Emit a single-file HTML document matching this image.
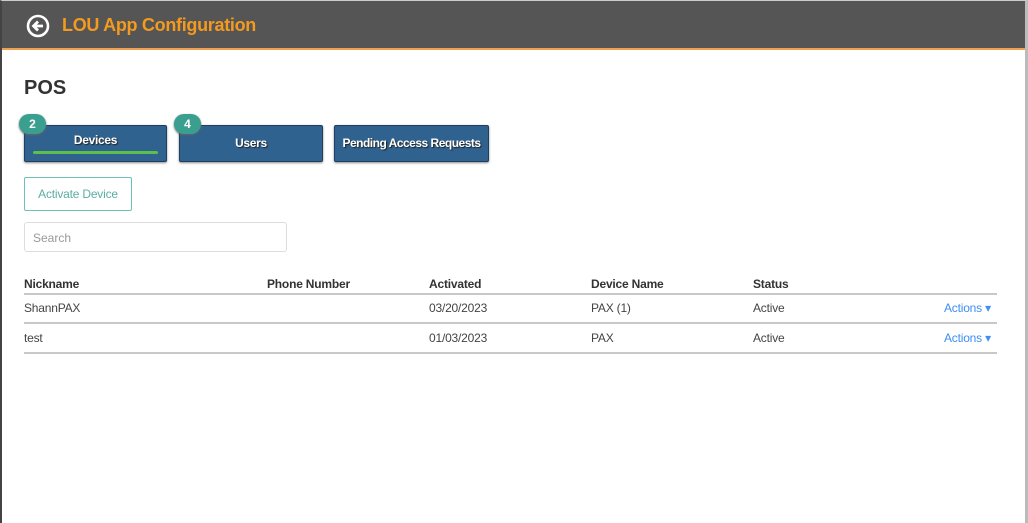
<!DOCTYPE html>
<html><head><meta charset="utf-8"><style>
*{margin:0;padding:0;box-sizing:border-box}
body{width:1028px;height:523px;background:#fff;font-family:"Liberation Sans",sans-serif;position:relative;overflow:hidden}
.frame{position:absolute;left:0;top:0;width:1028px;height:523px;border-left:2px solid #444;border-right:3px solid #bbb;border-top:1px solid #ccc}
.hdr{position:absolute;left:2px;top:1px;width:1023px;height:49px;background:#555;border-bottom:2px solid #f0a050}
.title{position:absolute;left:60px;top:14px;color:#f39a1f;font-weight:bold;font-size:18px;letter-spacing:-0.3px}
.back{position:absolute;left:24px;top:13px;width:24px;height:24px}
.pos{position:absolute;left:24px;top:77px;font-size:20px;font-weight:bold;color:#333}
.tab{position:absolute;top:125px;height:37px;background:#30628f;border:1px solid #1f3f5e;border-radius:2px;color:#fff;font-weight:bold;font-size:12px;letter-spacing:-0.3px;white-space:nowrap;text-align:center;line-height:34px;text-shadow:1px 1px 1px #222;box-shadow:0 1px 2px #888}
.badge{position:absolute;width:27px;height:20px;border-radius:10px;background:#3a9f8f;color:#fff;font-weight:bold;font-size:12px;text-align:center;line-height:20px;box-shadow:0 1px 2px #666}
.btn{position:absolute;left:24px;top:177px;width:108px;height:34px;border:1px solid #6cc2b8;border-radius:2px;color:#5aaea4;font-size:12px;text-align:center;line-height:32px;letter-spacing:-0.2px}
.search{position:absolute;left:24px;top:222px;width:263px;height:30px;border:1px solid #ddd;border-radius:3px;color:#999;font-size:12px;padding:8px 8px}
.t{position:absolute;font-size:12px;color:#444;letter-spacing:-0.2px}
.h{font-weight:bold;color:#333}
.line{position:absolute;left:24px;width:973px;height:2px;background:#c8c8c8}
.act{position:absolute;left:944px;color:#3d8ff5;font-size:12px;letter-spacing:-0.2px}
</style></head><body>
<div class="frame"></div>
<div class="hdr">
<svg class="back" viewBox="0 0 24 24"><circle cx="12" cy="12" r="10" fill="none" stroke="#fff" stroke-width="2.6"/><path d="M17 12H8M12 7.5L7.5 12 12 16.5" fill="none" stroke="#fff" stroke-width="2.8"/></svg>
<div class="title">LOU App Configuration</div>
</div>
<div class="pos">POS</div>
<div class="tab" style="left:24px;width:143px;line-height:28px">Devices<div style="position:absolute;left:8px;right:8px;top:25px;height:3px;background:#5cc04a;border-radius:2px"></div></div>
<div class="badge" style="left:19px;top:114px">2</div>
<div class="tab" style="left:179px;width:144px">Users</div>
<div class="badge" style="left:174px;top:114px">4</div>
<div class="tab" style="left:334px;width:155px;letter-spacing:-0.5px">Pending Access Requests</div>
<div class="btn">Activate Device</div>
<div class="search">Search</div>
<div class="t h" style="left:24px;top:277px">Nickname</div>
<div class="t h" style="left:267px;top:277px">Phone Number</div>
<div class="t h" style="left:429px;top:277px">Activated</div>
<div class="t h" style="left:591px;top:277px">Device Name</div>
<div class="t h" style="left:753px;top:277px">Status</div>
<div class="line" style="top:293px"></div>
<div class="t" style="left:24px;top:301px">ShannPAX</div>
<div class="t" style="left:429px;top:301px">03/20/2023</div>
<div class="t" style="left:591px;top:301px">PAX (1)</div>
<div class="t" style="left:753px;top:301px">Active</div>
<div class="act" style="top:301px">Actions ▾</div>
<div class="line" style="top:322px"></div>
<div class="t" style="left:24px;top:331px">test</div>
<div class="t" style="left:429px;top:331px">01/03/2023</div>
<div class="t" style="left:591px;top:331px">PAX</div>
<div class="t" style="left:753px;top:331px">Active</div>
<div class="act" style="top:331px">Actions ▾</div>
<div class="line" style="top:352px"></div>
</body></html>
